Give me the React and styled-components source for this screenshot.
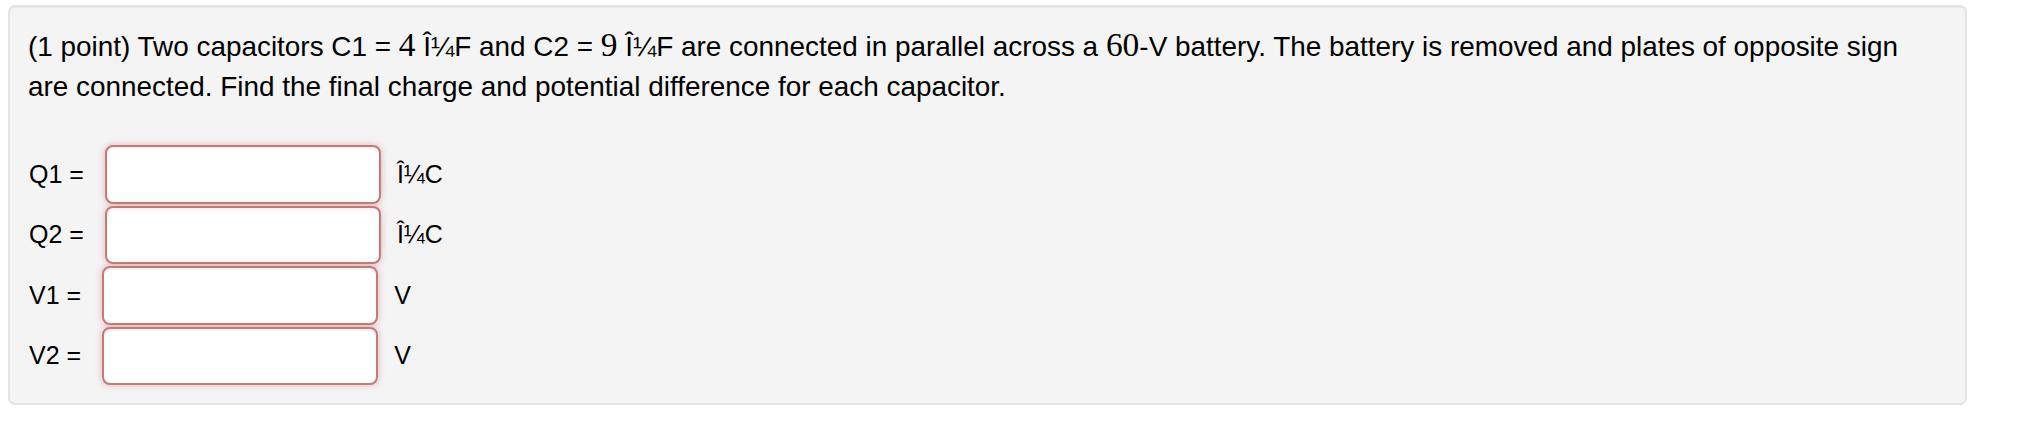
import React from "react";
import styled, { createGlobalStyle } from "styled-components";

const GlobalStyle = createGlobalStyle`
  html, body {
    margin: 0;
    padding: 0;
    background: #fff;
  }
  body {
    font-family: "Liberation Sans", Arial, Helvetica, sans-serif;
    color: #000;
  }
`;

const Page = styled.div`
  padding: 5px 53px 19px 8px;
`;

const Well = styled.div`
  background: #f4f4f4;
  border: 2px solid #e3e3e3;
  border-radius: 7px;
  padding: 20px 18px 18px 18px;
  box-shadow: inset 0 1px 1px rgba(0, 0, 0, 0.05);
`;

const Problem = styled.p`
  margin: 0 0 38px 0;
  font-size: 27.9px;
  line-height: 40px;
`;

const MathNum = styled.span`
  font-family: "Liberation Serif", "Times New Roman", serif;
  font-size: 1.2em;
  line-height: 1;
`;

const Answers = styled.div`
  display: flex;
  flex-direction: column;
  gap: 2px;
`;

const Row = styled.div`
  display: flex;
  align-items: center;
  font-size: 25px;
`;

const Label = styled.span`
  padding-left: 1px;
  margin-right: 21px;
  white-space: pre;
`;

const AnswerInput = styled.input`
  box-sizing: border-box;
  width: 276px;
  height: 58.5px;
  background: #fff;
  border: 2px solid #c67a78;
  border-radius: 8px;
  box-shadow: inset 0 2px 2px rgba(0, 0, 0, 0.06), 0 0 7px rgba(199, 110, 108, 0.45);
  margin: 0 16px 0 0;
  padding: 4px 10px;
  font-size: 25px;
  outline: none;
`;

const Unit = styled.span`
  white-space: pre;
`;

const answers = [
  { label: "Q1 =", unit: "Î¼C" },
  { label: "Q2 =", unit: "Î¼C" },
  { label: "V1 =", unit: "V" },
  { label: "V2 =", unit: "V" },
];

export default function App() {
  return (
    <>
      <GlobalStyle />
      <Page>
        <Well>
          <Problem>
            (1 point) Two capacitors C1 = <MathNum>4</MathNum> Î¼F and C2 ={" "}
            <MathNum>9</MathNum> Î¼F are connected in parallel across a{" "}
            <MathNum>60</MathNum>-V battery. The battery is removed and plates
            of opposite sign
            <br />
            are connected. Find the final charge and potential difference for
            each capacitor.
          </Problem>
          <Answers>
            {answers.map((a) => (
              <Row key={a.label}>
                <Label>{a.label}</Label>
                <AnswerInput type="text" aria-label={a.label} />
                <Unit>{a.unit}</Unit>
              </Row>
            ))}
          </Answers>
        </Well>
      </Page>
    </>
  );
}
